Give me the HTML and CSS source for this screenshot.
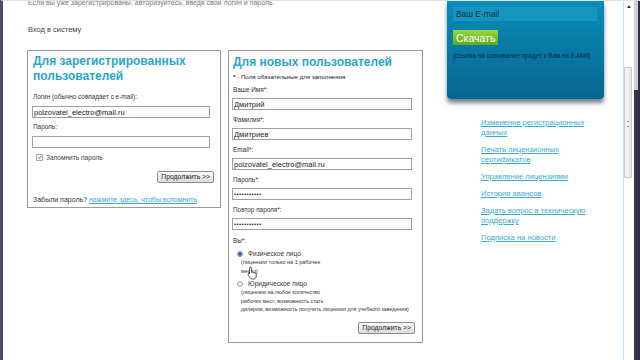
FILE: index.html
```html
<!DOCTYPE html>
<html lang="ru">
<head>
    <meta charset="UTF-8">
    <meta name="viewport" content="width=device-width, initial-scale=1.0">
    <title>Вход в систему</title>
    <link rel="stylesheet" href="styles.css">
</head>
<body>
    <div class="screen">
        <div class="main">
            <p class="intro">Если вы уже зарегистрированы, авторизуйтесь, введя свой логин и пароль.</p>
            <p class="section-title">Вход в систему</p>

            <div class="forms">
                <!-- вход -->
                <div class="box box-login">
                    <h2>Для зарегистрированных пользователей</h2>
                    <label class="lbl lbl-first">Логин (обычно совпадает с e-mail):</label>
                    <input class="field" type="text" value="polzovatel_electro@mail.ru">
                    <label class="lbl">Пароль:</label>
                    <input class="field" type="password" value="">
                    <div class="check-row">
                        <span class="check">
                            <svg width="7" height="7" viewBox="0 0 7 7"><path d="M1.5 3.6 L3 5.2 L5.6 1.4" fill="none" stroke="#555" stroke-width="1"/></svg>
                        </span>
                        <span>Запомнить пароль</span>
                    </div>
                    <div class="btn-row"><button class="btn">Продолжить &gt;&gt;</button></div>
                    <p class="forgot">Забыли пароль? <a href="#">нажмите здесь, чтобы вспомнить</a></p>
                </div>

                <!-- регистрация -->
                <div class="box box-reg">
                    <h2>Для новых пользователей</h2>
                    <p class="required"><b>*</b> - Поля обязательные для заполнения</p>
                    <label class="lbl">Ваше Имя*:</label>
                    <input class="field" type="text" value="Дмитрий">
                    <label class="lbl">Фамилия*:</label>
                    <input class="field" type="text" value="Дмитриев">
                    <label class="lbl">Email*:</label>
                    <input class="field" type="text" value="polzovatel_electro@mail.ru">
                    <label class="lbl">Пароль*:</label>
                    <input class="field" type="password" value="xxxxxxxxxxx">
                    <label class="lbl">Повтор пароля*:</label>
                    <input class="field" type="password" value="xxxxxxxxxxx">
                    <label class="lbl lbl-you">Вы*:</label>

                    <div class="radio-row"><span class="radio radio-on"></span><span>Физическое лицо</span></div>
                    <p class="note">(лицензии только на 1 рабочее<br>место)</p>
                    <div class="radio-row"><span class="radio"></span><span>Юридическое лицо</span></div>
                    <p class="note note-small">(лицензии на любое количество<br>рабочих мест; возможность стать<br>дилером, возможность получить лицензии для учебного заведения)</p>

                    <div class="btn-row"><button class="btn">Продолжить &gt;&gt;</button></div>

                    <svg class="pointer" width="12" height="14" viewBox="0 0 12 14">
                        <path d="M3.5 1 C4.3 1 4.6 1.5 4.6 2.2 V6.3 L5 6.1 C5.6 5.9 6.2 6 6.4 6.6 C7 6.3 7.6 6.5 7.8 7.1 C8.4 6.9 9.1 7.2 9.2 7.9 V10.5 C9.2 12 8.2 13 6.8 13 H5.3 C4.2 13 3.5 12.4 2.9 11.5 L1.2 8.6 C0.9 8.1 1.1 7.6 1.6 7.5 C2 7.4 2.3 7.6 2.5 8 V2.2 C2.5 1.5 2.8 1 3.5 1 Z" fill="#fff" stroke="#222" stroke-width="0.8"/>
                    </svg>
                </div>
            </div>
        </div>

        <div class="side">
            <div class="panel">
                <div class="email">Ваш E-mail</div>
                <button class="download">Скачать</button>
                <p class="panel-note">(ссылка на скачивание придет к Вам на E-Mail)</p>
            </div>
            <ul class="links">
                <li><a href="#">Изменение регистрационных<br>данных</a></li>
                <li><a href="#">Печать лицензионных<br>сертификатов</a></li>
                <li><a href="#">Управление лицензиями</a></li>
                <li><a href="#">История авансов</a></li>
                <li><a href="#">Задать вопрос в техническую<br>поддержку</a></li>
                <li><a href="#">Подписка на новости</a></li>
            </ul>
        </div>

        <div class="scrollbar">
            <span class="arrow"></span>
            <span class="thumb"><span class="grip"></span></span>
        </div>
        <div class="edge"></div>
    </div>
</body>
</html>
```

FILE: styles.css
```css
body {
    margin: 0;
    background: #fff;
    font-family: 'Liberation Sans', Arial, sans-serif;
    color: #333;
}
.screen {
    display: flex;
    height: 360px;
    overflow: hidden;
    border-left: 3px solid #4b4a6e;
    border-top: 1px solid #e2e2e2;
    box-sizing: border-box;
}
.main {
    width: 420px;
    padding-left: 24px;
    box-sizing: border-box;
}
.intro {
    margin: -3px 0 0 1px;
    font-size: 7px;
    line-height: 9px;
    color: #777;
}
.section-title {
    margin: 18px 0 0 1px;
    font-size: 7.5px;
    line-height: 9px;
    color: #444;
}
.forms {
    display: flex;
    align-items: flex-start;
    gap: 7px;
    margin-top: 16px;
}
.box {
    position: relative;
    border: 1px solid #9a9a9a;
    box-sizing: border-box;
}
.box-login {
    width: 194px;
    height: 158px;
    padding: 3px 4px 0;
}
.box-reg {
    width: 195px;
    height: 293px;
    padding: 4px 3px 0;
}
h2 {
    margin: 0 0 0 1px;
    font-size: 12px;
    line-height: 15px;
    font-weight: bold;
    color: #2aa6cc;
}
.lbl {
    display: block;
    margin: 0 0 3px 1px;
    font-size: 6.4px;
    line-height: 10px;
    color: #333;
}
.box-login .lbl {
    margin-bottom: 4px;
}
.lbl-first {
    margin-top: 8px;
}
.field {
    display: block;
    width: 178px;
    height: 12px;
    margin: 0 0 5px;
    padding: 0 1px;
    border: 1px solid #a0a0a0;
    box-sizing: border-box;
    font-family: 'Liberation Sans', Arial, sans-serif;
    font-size: 7.5px;
    color: #222;
    background: #fff;
}
.box-login .field {
    margin-bottom: 4px;
}
.box-reg .field {
    width: 180px;
}
input[type="password"] {
    font-size: 6px;
    letter-spacing: 0.4px;
}
.check-row {
    display: flex;
    align-items: center;
    gap: 3px;
    margin: 6px 0 0 4px;
    font-size: 6.6px;
    color: #444;
}
.check {
    display: flex;
    width: 7px;
    height: 7px;
    border: 1px solid #aaa;
    box-sizing: border-box;
    background: #f2f2f2;
    align-items: center;
    justify-content: center;
}
.btn-row {
    display: flex;
    justify-content: flex-end;
    margin-top: 10px;
    padding-right: 2px;
}
.btn {
    height: 12px;
    padding: 0 3px;
    border: 1px solid #8d8d8d;
    border-radius: 2px;
    background: linear-gradient(#fafafa, #dcdcdc);
    font-family: 'Liberation Sans', Arial, sans-serif;
    font-size: 6.8px;
    line-height: 10px;
    color: #222;
}
.forgot {
    margin: 12px 0 0 1px;
    font-size: 7px;
    line-height: 9px;
    color: #333;
}
a {
    color: #3aa9d0;
}
.required {
    margin: 2px 0 4px 1px;
    font-size: 6.2px;
    line-height: 9px;
    color: #222;
}
.lbl-you {
    margin-top: 6px;
}
.radio-row {
    display: flex;
    align-items: center;
    gap: 5px;
    margin: 3px 0 0 5px;
    font-size: 6.6px;
    line-height: 9px;
    color: #333;
}
.radio {
    width: 6px;
    height: 6px;
    border: 1px solid #9a9a9a;
    border-radius: 50%;
    box-sizing: border-box;
    background: #f4f4f4;
}
.radio-on {
    background: radial-gradient(circle, #2a5fa8 0 1.5px, #e8eef6 2px);
    border-color: #7e99bd;
}
.note {
    margin: 0 0 3px 9px;
    font-size: 5.5px;
    line-height: 9px;
    color: #333;
}
.note-small {
    font-size: 5.3px;
    line-height: 8.5px;
}
.box-reg .btn-row {
    margin-top: 8px;
    padding-right: 4px;
}
.pointer {
    position: absolute;
    left: 18px;
    top: 215px;
}
.side {
    width: 158px;
    margin-left: 24px;
}
.panel {
    height: 98px;
    padding: 6px 7px 0 6px;
    box-sizing: border-box;
    background: linear-gradient(#0a8cba, #066690);
    border-radius: 0 0 4px 4px;
    box-shadow: 0 4px 4px rgba(0, 30, 50, 0.55);
}
.email {
    height: 14px;
    padding-left: 3px;
    background: #1596c2;
    font-size: 8.4px;
    line-height: 14px;
    color: #0b2b4c;
}
.download {
    display: block;
    height: 15px;
    margin-top: 9px;
    padding: 0 3px;
    border: none;
    background: linear-gradient(#9ad83e, #5ea91c);
    font-family: 'Liberation Sans', Arial, sans-serif;
    font-size: 10.5px;
    color: #fff;
}
.panel-note {
    margin: 7px 0 0;
    font-size: 6.3px;
    line-height: 8px;
    color: #0a2a44;
}
.links {
    list-style: none;
    margin: 19px 0 0;
    padding: 0 0 0 34px;
    font-size: 7.6px;
    line-height: 10px;
}
.links li {
    margin-bottom: 7px;
}
.scrollbar {
    position: relative;
    width: 11px;
    margin-left: 19px;
    border-left: 1px solid #bfe6f2;
    box-sizing: border-box;
}
.arrow {
    position: absolute;
    left: 3px;
    top: 4px;
    border-left: 2px solid transparent;
    border-right: 2px solid transparent;
    border-bottom: 3px solid #333;
}
.thumb {
    position: absolute;
    left: 0;
    top: 66px;
    width: 8px;
    height: 111px;
    border: 1px solid #c8c8c8;
    border-radius: 1px;
    box-sizing: border-box;
    background: linear-gradient(90deg, #f6f6f6, #e6e6e6);
}
.grip {
    position: absolute;
    left: 2px;
    top: 53px;
    width: 2px;
    height: 4px;
    border-top: 1px solid #999;
    border-bottom: 1px solid #999;
}
.edge {
    width: 4px;
    background: linear-gradient(#cfcfd6 0 89px, #33334a 89px);
    border-right: 2px solid #2e2e44;
    flex-shrink: 0;
}
```
